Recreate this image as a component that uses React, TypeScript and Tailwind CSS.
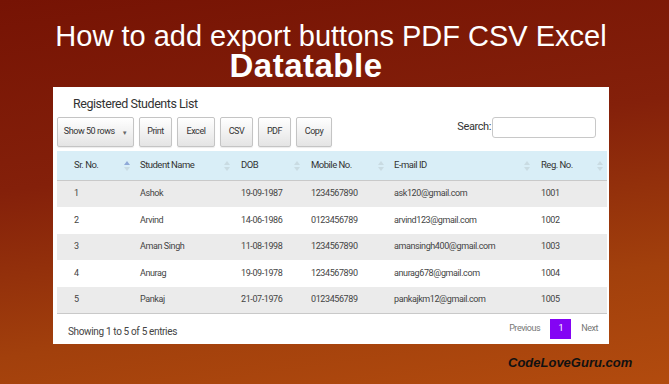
import clsx from 'clsx';

const columns = [
  { label: 'Sr. No.', width: 'w-[77px]', pad: 'pl-[17px]', active: true },
  { label: 'Student Name', width: 'w-[100px]', pad: 'pl-[6px]' },
  { label: 'DOB', width: 'w-[70px]', pad: 'pl-[7px]' },
  { label: 'Mobile No.', width: 'w-[84px]', pad: 'pl-[7px]' },
  { label: 'E-mail ID', width: 'w-[146px]', pad: 'pl-[6px]' },
  { label: 'Reg. No.', width: 'w-[73px]', pad: 'pl-[7px]' },
];

const students = [
  ['1', 'Ashok', '19-09-1987', '1234567890', 'ask120@gmail.com', '1001'],
  ['2', 'Arvind', '14-06-1986', '0123456789', 'arvind123@gmail.com', '1002'],
  ['3', 'Aman Singh', '11-08-1998', '1234567890', 'amansingh400@gmail.com', '1003'],
  ['4', 'Anurag', '19-09-1978', '1234567890', 'anurag678@gmail.com', '1004'],
  ['5', 'Pankaj', '21-07-1976', '0123456789', 'pankajkm12@gmail.com', '1005'],
];

function SortIcon({ active }: { active?: boolean }) {
  return (
    <svg width="6" height="10" viewBox="0 0 6 10" className="shrink-0">
      <path d="M0 4 L3 0 L6 4 Z" fill={active ? '#8fa9d8' : '#c9dbe2'} />
      <path d="M0 6 L3 10 L6 6 Z" fill="#c9dbe2" />
    </svg>
  );
}

function ToolButton({ children, className }: { children: React.ReactNode; className?: string }) {
  return (
    <button
      type="button"
      className={clsx(
        'flex h-[30px] items-center justify-center rounded-[2px] border border-[#c4c4c4] bg-[linear-gradient(#ffffff,#e4e4e4)] text-[9px] tracking-[-0.45px] text-[#333] shadow-[0_1px_1px_rgba(0,0,0,0.08)]',
        className,
      )}
    >
      {children}
    </button>
  );
}

export default function App() {
  return (
    <div className="h-[384px] w-[669px] overflow-hidden bg-[linear-gradient(172deg,#761304_0%,#84200a_40%,#a2400c_75%,#b24b0e_100%)] font-['Liberation_Sans',Arial,sans-serif]">
      <h1 className="pr-[7px] pt-[22px] text-center text-[29px] leading-[29px] text-white">
        How to add export buttons PDF CSV Excel
      </h1>
      <h2 className="pr-[57px] text-center text-[33px] font-bold leading-[30px] tracking-[0.5px] text-white">Datatable</h2>

      <div className="ml-[53px] mt-[6px] h-[257px] w-[556px] bg-white pl-[4px] pr-[2px] font-['Roboto',sans-serif]">
        <p className="pl-[16px] pt-[8px] text-[12.5px] leading-[18px] tracking-[-0.45px] text-[#333]">Registered Students List</p>

        <div className="mt-[4px] flex items-start">
          <div className="flex gap-[5px]">
            <ToolButton className="w-[77px] gap-[7px]">
              Show 50 rows <span className="text-[6px] text-[#666]">▼</span>
            </ToolButton>
            <ToolButton className="w-[33px]">Print</ToolButton>
            <ToolButton className="w-[38px]">Excel</ToolButton>
            <ToolButton className="w-[33px]">CSV</ToolButton>
            <ToolButton className="w-[33px]">PDF</ToolButton>
            <ToolButton className="w-[36px]">Copy</ToolButton>
          </div>
          <div className="ml-auto mr-[11px] flex items-center gap-[1px]">
            <span className="text-[11px] tracking-[-0.4px] text-[#333]">Search:</span>
            <input className="h-[21px] w-[104px] rounded-[3px] border border-[#c8c8c8] bg-white" />
          </div>
        </div>

        <div className="mt-[4px] w-[550px]">
          <div className="flex h-[30px] border-b border-[#c9c9c9] bg-[#d9eef7]">
            {columns.map((col) => (
              <div key={col.label} className={clsx('flex items-center pr-[4px] text-[9.5px] tracking-[-0.5px] text-[#333]', col.width, col.pad)}>
                <span className="flex-1">{col.label}</span>
                <SortIcon active={col.active} />
              </div>
            ))}
          </div>
          {students.map((row, i) => (
            <div key={row[0]} className={clsx('flex h-[26.4px]', i % 2 === 0 ? 'bg-[#ebebeb]' : 'bg-white')}>
              {row.map((cell, j) => (
                <div key={j} className={clsx('flex items-center text-[9px] tracking-[-0.4px] text-[#444]', columns[j].width, columns[j].pad)}>
                  {cell}
                </div>
              ))}
            </div>
          ))}
          <div className="border-b border-[#c9c9c9]" />
        </div>

        <div className="flex h-[30px] items-center">
          <span className="pl-[11px] pt-[6px] text-[10px] tracking-[-0.35px] text-[#444]">Showing 1 to 5 of 5 entries</span>
          <div className="ml-auto mr-[9px] flex items-center text-[9px] tracking-[-0.45px]">
            <span className="text-[#777]">Previous</span>
            <span className="ml-[10px] flex h-[20px] w-[21px] items-center justify-center bg-[#8404f4] text-white">1</span>
            <span className="ml-[10px] text-[#777]">Next</span>
          </div>
        </div>
      </div>

      <p className="ml-[508px] mt-[11px] text-[13px] font-bold italic leading-[16px] text-[#111]">CodeLoveGuru.com</p>
    </div>
  );
}
